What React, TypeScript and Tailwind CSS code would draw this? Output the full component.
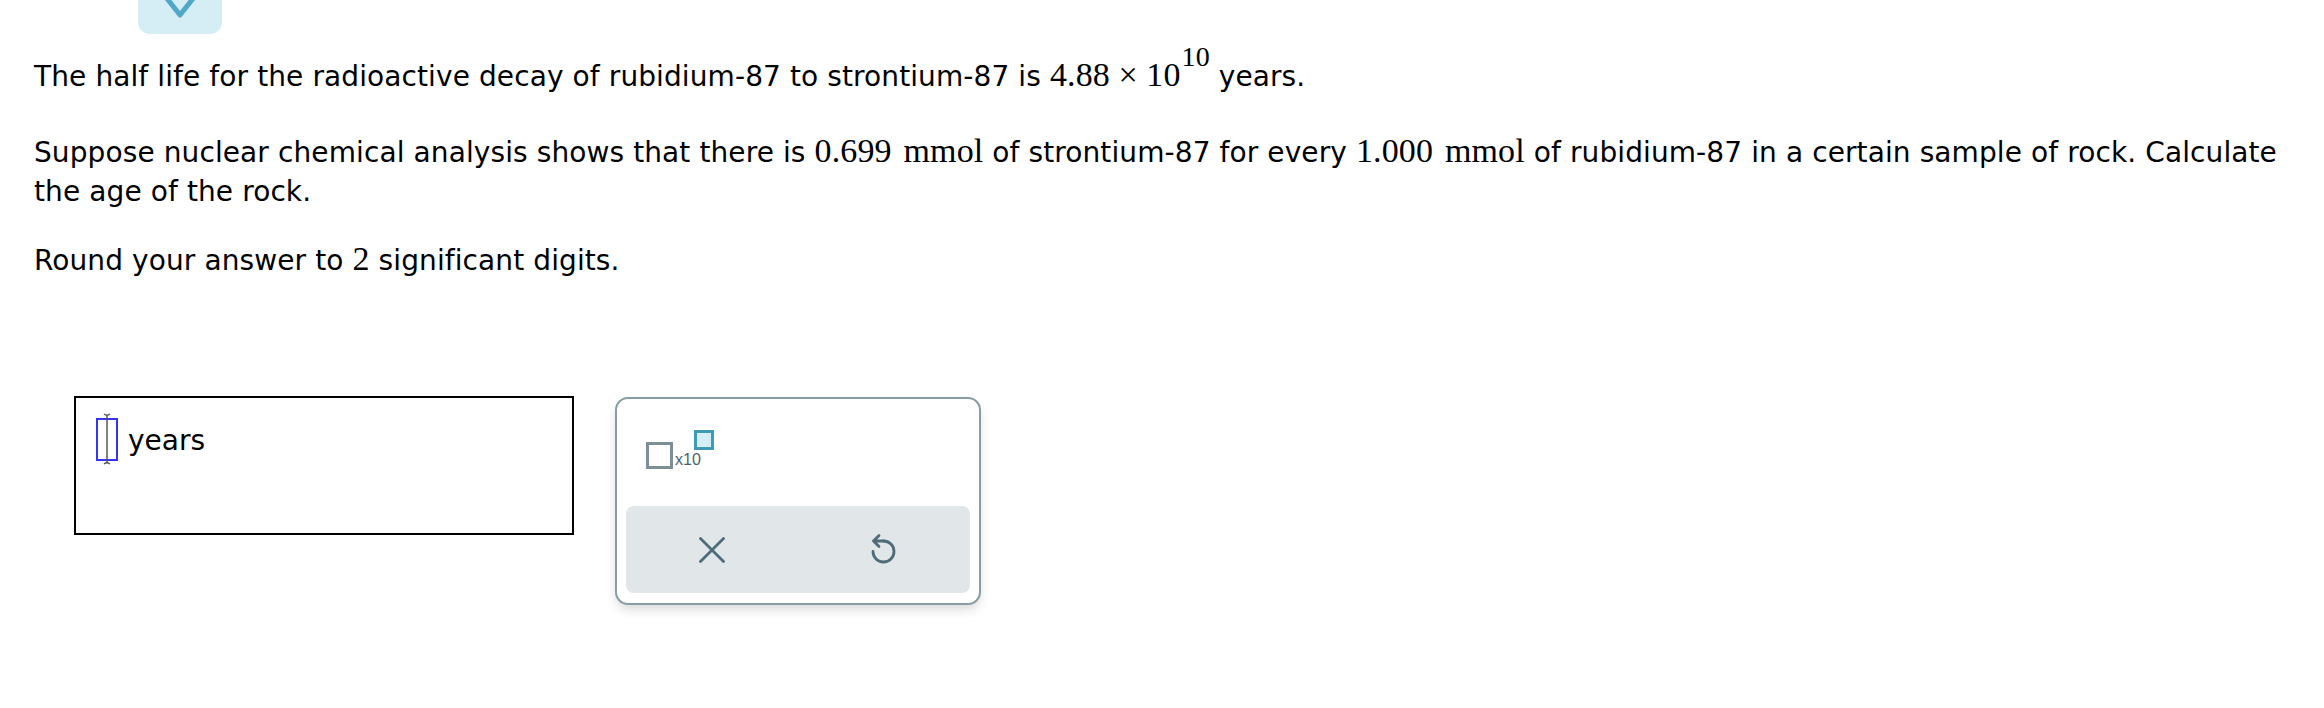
import React from "react";

function MathText({ children }: { children: React.ReactNode }) {
  return (
    <span className="font-['Liberation_Serif',serif] text-[34px] leading-none">
      {children}
    </span>
  );
}

function Quantity({ value, unit }: { value: string; unit: string }) {
  return (
    <MathText>
      {value}
      <span className="ml-[12px]">{unit}</span>
    </MathText>
  );
}

function CursorIcon() {
  return (
    <svg width="24" height="52" viewBox="0 0 24 52" className="shrink-0">
      <rect x="2" y="6" width="20" height="41" fill="#fff" stroke="#3434f0" strokeWidth="2" />
      <path d="M12 2 V50" stroke="#555" strokeWidth="1.5" />
      <path d="M9 1 Q12 3.5 15 1 M9 51 Q12 48.5 15 51" stroke="#555" strokeWidth="1.3" fill="none" />
    </svg>
  );
}

function CloseIcon() {
  return (
    <svg width="26" height="26" viewBox="0 0 26 26">
      <path d="M1.5 1.5 L24.5 24.5 M24.5 1.5 L1.5 24.5" stroke="#4d6b78" strokeWidth="2.8" strokeLinecap="round" />
    </svg>
  );
}

function UndoIcon() {
  return (
    <svg width="28" height="34" viewBox="0 0 28 34" className="mt-[-6px]">
      <path
        d="M13.5 11 A10.5 10.5 0 1 1 3 21.5"
        stroke="#4d6b78"
        strokeWidth="2.8"
        fill="none"
        strokeLinecap="round"
      />
      <path
        d="M13.5 11 H3.5 M9 5.5 L3.5 11 L9 16.5"
        stroke="#4d6b78"
        strokeWidth="2.8"
        fill="none"
        strokeLinecap="round"
        strokeLinejoin="round"
      />
    </svg>
  );
}

export default function App() {
  return (
    <div className="h-[708px] w-full overflow-hidden bg-white font-['DejaVu_Sans',Verdana,sans-serif] text-[28px] text-black">
      {/* collapsed toolbar tab */}
      <div className="ml-[138px] flex h-[34px] w-[84px] items-start justify-center overflow-hidden rounded-b-[12px] bg-[#d5edf4]">
        <svg width="40" height="20" viewBox="0 0 40 20">
          <path d="M5 -4 L20 15 L35 -4" stroke="#4fa8c7" strokeWidth="5" fill="none" strokeLinecap="round" strokeLinejoin="round" />
        </svg>
      </div>

      <div className="pl-[34px] pr-[10px] leading-[39px] tracking-[0.1px]">
        <p className="mt-[23px]">
          The half life for the radioactive decay of rubidium-87 to strontium-87 is{" "}
          <MathText>
            4.88 × 10
            <span className="relative -top-[20px] ml-[1px] text-[28px]">10</span>
          </MathText>{" "}
          years.
        </p>

        <p className="mt-[37px]">
          Suppose nuclear chemical analysis shows that there is{" "}
          <Quantity value="0.699" unit="mmol" /> of strontium-87 for every{" "}
          <Quantity value="1.000" unit="mmol" /> of rubidium-87 in a certain sample of rock.
          Calculate the age of the rock.
        </p>

        <p className="mt-[30px]">
          Round your answer to <MathText>2</MathText> significant digits.
        </p>
      </div>

      <div className="mt-[116px] flex items-start">
        {/* answer box */}
        <div className="ml-[74px] flex h-[139px] w-[500px] items-start border-2 border-black">
          <div className="ml-[19px] mt-[15px]">
            <CursorIcon />
          </div>
          <span className="ml-[9px] mt-[29px] leading-none">years</span>
        </div>

        {/* tools panel */}
        <div className="ml-[41px] mt-[1px] flex h-[208px] w-[366px] flex-col rounded-[13px] border-2 border-[#889ca6] bg-white p-[9px] shadow-[0_6px_12px_-2px_rgba(0,0,0,0.16)]">
          <div className="h-[98px] pl-[20px] pt-[22px]">
            <div className="relative h-[40px] w-[70px]">
              <span className="absolute left-0 top-[12px] h-[27px] w-[27px] border-[3px] border-[#7c8f98]" />
              <span className="absolute left-[29px] top-[22px] font-['Liberation_Sans',sans-serif] text-[16px] leading-none text-[#4b6370]">
                x10
              </span>
              <span className="absolute left-[48px] top-0 h-[20px] w-[20px] border-[3px] border-[#3f9bb5] bg-[#d5edf4]" />
            </div>
          </div>
          <div className="grid h-[87px] grid-cols-2 rounded-[8px] bg-[#e1e6e9]">
            <div className="flex items-center justify-center">
              <CloseIcon />
            </div>
            <div className="flex items-center justify-center">
              <UndoIcon />
            </div>
          </div>
        </div>
      </div>
    </div>
  );
}
